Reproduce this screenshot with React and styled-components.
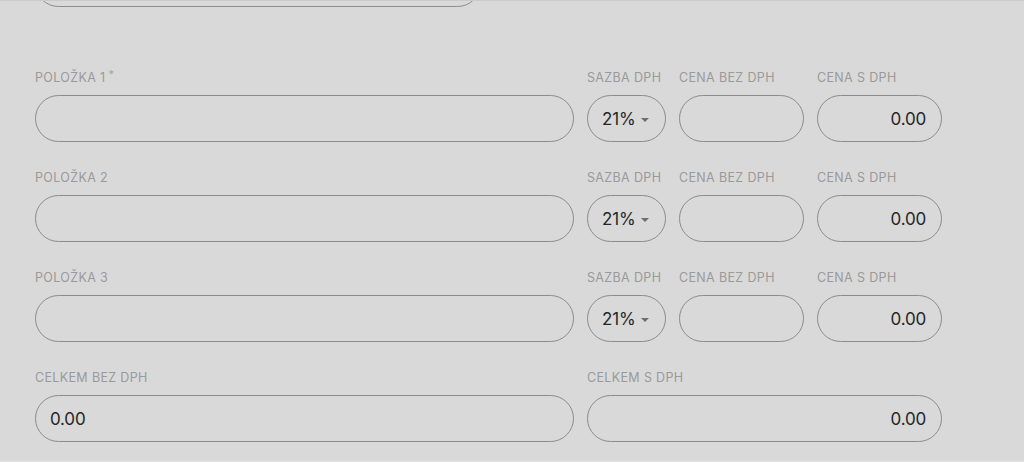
import styled, { createGlobalStyle } from "styled-components";

const GlobalStyle = createGlobalStyle`
  html, body {
    margin: 0;
    padding: 0;
    background: #d9d9d9;
    font-family: Inter, "Liberation Sans", sans-serif;
  }
`;

const Page = styled.div`
  box-sizing: border-box;
  height: 462px;
  overflow: hidden;
  background: #d9d9d9;
  border-top: 1px solid #cbcbcb;
  border-bottom: 1px solid #e2e2e2;
`;

const Form = styled.div`
  width: 907px;
  margin-left: 35px;
  display: flex;
  flex-direction: column;
  gap: 26px;
`;

const TopStub = styled.div`
  box-sizing: border-box;
  width: 446px;
  height: 47px;
  margin-top: -41px;
  margin-bottom: 35px;
  border: 1px solid #8c8c8c;
  border-radius: 24px;
`;

const Row = styled.div`
  display: grid;
  grid-template-columns: ${(p) => p.$cols};
  column-gap: 13px;
`;

const Group = styled.div`
  display: flex;
  flex-direction: column;
  gap: 10px;
`;

const Label = styled.div`
  height: 14px;
  margin-top: 3px;
  line-height: 14px;
  font-size: 12.5px;
  letter-spacing: 0.35px;
  color: #9a9a9a;
  text-transform: uppercase;
  white-space: nowrap;

  sup {
    font-size: 11px;
    margin-left: 3px;
    vertical-align: 4px;
    line-height: 0;
    color: #a5a5a5;
  }
`;

const Field = styled.div`
  box-sizing: border-box;
  height: 47px;
  border: 1px solid #8c8c8c;
  border-radius: 24px;
  padding: 0 15px 0 14px;
  display: flex;
  align-items: center;
  justify-content: ${(p) => (p.$right ? "flex-end" : "flex-start")};
  font-size: 17px;
  color: #262626;
  letter-spacing: -0.2px;
`;

const Caret = styled.span`
  width: 0;
  height: 0;
  margin-left: 6px;
  margin-top: 2px;
  border-left: 4.5px solid transparent;
  border-right: 4.5px solid transparent;
  border-top: 4px solid #6e6e6e;
`;

const ITEM_COLS = "539px 79px 125px 125px";

function ItemRow({ n, required }) {
  return (
    <Row $cols={ITEM_COLS}>
      <Group>
        <Label>
          Položka {n}
          {required && <sup>*</sup>}
        </Label>
        <Field />
      </Group>
      <Group>
        <Label>Sazba DPH</Label>
        <Field>
          21%
          <Caret />
        </Field>
      </Group>
      <Group>
        <Label>Cena bez DPH</Label>
        <Field />
      </Group>
      <Group>
        <Label>Cena s DPH</Label>
        <Field $right>0.00</Field>
      </Group>
    </Row>
  );
}

export default function App() {
  return (
    <Page>
      <GlobalStyle />
      <Form>
        <TopStub />
        <ItemRow n={1} required />
        <ItemRow n={2} />
        <ItemRow n={3} />
        <Row $cols="539px 355px">
          <Group>
            <Label>Celkem bez DPH</Label>
            <Field>0.00</Field>
          </Group>
          <Group>
            <Label>Celkem s DPH</Label>
            <Field $right>0.00</Field>
          </Group>
        </Row>
      </Form>
    </Page>
  );
}
